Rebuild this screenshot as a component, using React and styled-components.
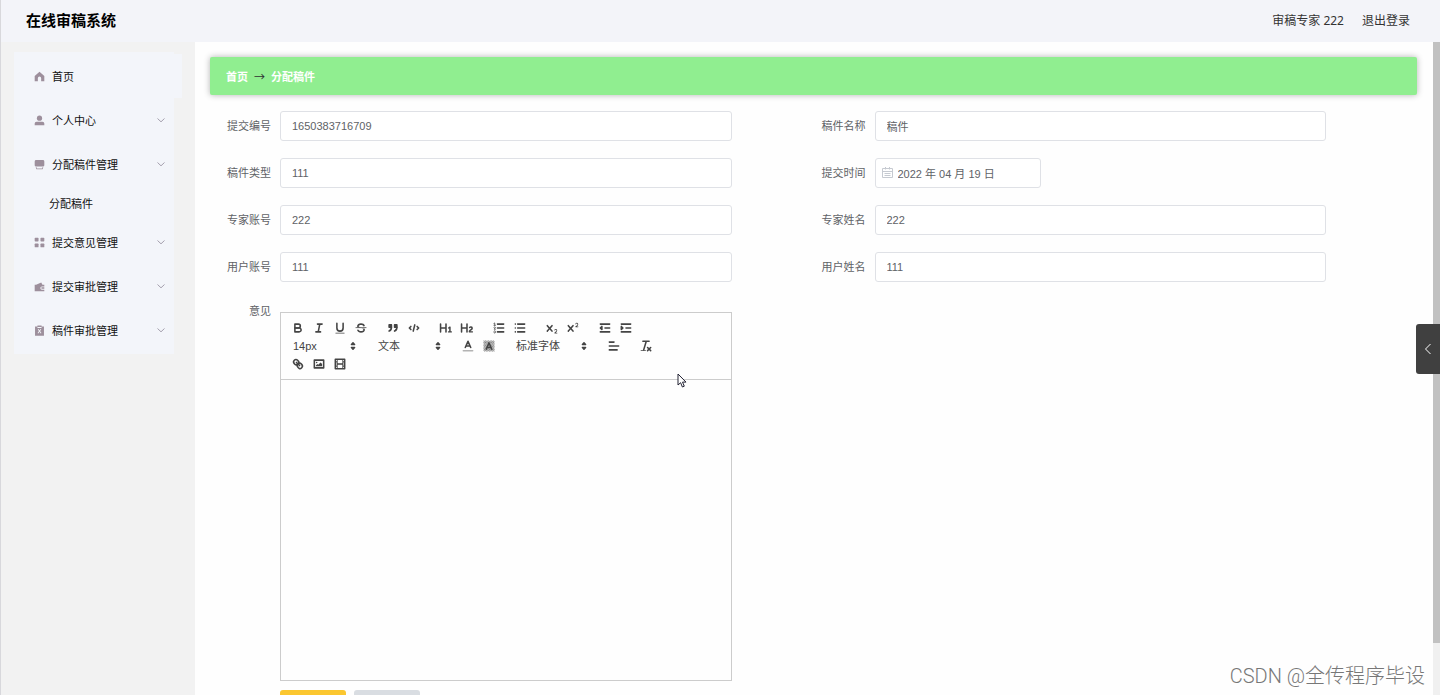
import { useState } from "react";
import styled, { createGlobalStyle } from "styled-components";

const menu = [
  { name: "首页", icon: "home", home: true },
  { name: "个人中心", icon: "user" },
  { name: "分配稿件管理", icon: "shop", children: ["分配稿件"] },
  { name: "提交意见管理", icon: "grid" },
  { name: "提交审批管理", icon: "wallet" },
  { name: "稿件审批管理", icon: "order" },
];

const campos = [
  { id: "bianhao", label: "提交编号", value: "1650383716709" },
  { id: "mingcheng", label: "稿件名称", value: "稿件" },
  { id: "leixing", label: "稿件类型", value: "111" },
  { id: "shijian", label: "提交时间", value: "2022 年 04 月 19 日", date: true },
  { id: "zhuanjiazhanghao", label: "专家账号", value: "222" },
  { id: "zhuanjiaxingming", label: "专家姓名", value: "222" },
  { id: "yonghuzhanghao", label: "用户账号", value: "111" },
  { id: "yonghuxingming", label: "用户姓名", value: "111" },
];

const menuIcons = {
  home: <path d="M8 1 1 7.4V15h4.6v-4.5a2.4 2.4 0 0 1 4.8 0V15H15V7.4Z" />,
  user: (
    <>
      <circle cx="8" cy="4.6" r="3.8" />
      <path d="M1 15v-2.5a2.7 2.7 0 0 1 2.7-2.7h8.6a2.7 2.7 0 0 1 2.7 2.7V15Z" />
    </>
  ),
  shop: (
    <>
      <path d="M3 1.5h10a2 2 0 0 1 2 2V9a2 2 0 0 1-2 2H3a2 2 0 0 1-2-2V3.500a2 2 0 0 1 2-2Z" />
      <path d="M2.500 12h1.200l.6 1.800h7.400l.6-1.800h1.200l-1 3h-9Z" />
    </>
  ),
  grid: (
    <>
      <rect x="1" y="1" width="5.600" height="5.600" rx="1" />
      <rect x="9.400" y="1" width="5.600" height="5.600" rx="1" />
      <rect x="1" y="9.400" width="5.600" height="5.600" rx="1" />
      <rect x="9.400" y="9.400" width="5.600" height="5.600" rx="1" />
    </>
  ),
  wallet: (
    <path
      fillRule="evenodd"
      d="M1 5.500h2L10.500 2l1.800 3.500H15V8h-3.500a2.300 2.300 0 0 0 0 4.600H15V15H1ZM11.600 9.200H15v2.200h-3.400a1.100 1.100 0 0 1 0-2.200Z"
    />
  ),
  order: (
    <path
      fillRule="evenodd"
      d="M1.500 2H5V.800h6V2h3.500v13.500h-13ZM5 3v1.200h6V3ZM5.500 6.500 7.200 8.800 5.200 11.500l1 .8L8 9.900l1.800 2.400 1-.8-2-2.700 1.700-2.300-1-.8L8 7.800 6.500 5.700Z"
    />
  ),
};

const xPath =
  "M9.65,5.241a1,1,0,0,0-1.409.108L6,7.964,3.759,5.349A1,1,0,0,0,2.192,6.59178Q2.21541,6.6213,2.241,6.649L4.684,9.5,2.241,12.35A1,1,0,0,0,3.71,13.70722q0.02557-.02768.049-0.05722L6,11.036,8.241,13.65a1,1,0,1,0,1.567-1.24277Q9.78459,12.3777,9.759,12.35L7.316,9.5,9.759,6.651A1,1,0,0,0,9.65,5.241Z";
const twoPath =
  "M15.5,15H13.861a3.858,3.858,0,0,0,1.914-2.975,1.8,1.8,0,0,0-1.6-1.751A1.921,1.921,0,0,0,12.021,11.7a0.50013,0.50013,0,1,0,.957.291h0a0.914,0.914,0,0,1,1.053-.725,0.81,0.81,0,0,1,.744.762c0,1.076-1.16971,1.86982-1.93971,2.43082A1.45639,1.45639,0,0,0,12,15.5a0.5,0.5,0,0,0,.5.5h3A0.5,0.5,0,0,0,15.5,15Z";

const toolIcons = {
  bold: (
    <>
      <path d="M5,4H9.5A2.5,2.5,0,0,1,12,6.5v0A2.5,2.5,0,0,1,9.5,9H5V4Z" />
      <path d="M5,9h5.5A2.5,2.5,0,0,1,13,11.5v0A2.5,2.5,0,0,1,10.5,14H5V9Z" />
    </>
  ),
  italic: <path d="M7,4H13M5,14H11M8,14L10,4" />,
  underline: (
    <>
      <path d="M5,3V9a4.012,4.012,0,0,0,4,4H9a4.012,4.012,0,0,0,4-4V3" />
      <rect className="fill" height="1" rx="0.5" width="12" x="3" y="15" />
    </>
  ),
  strike: (
    <>
      <path className="thin" d="M15.5,8.5H2.5" />
      <path
        className="fill"
        d="M9.007,8C6.542,7.791,6,7.519,6,6.5,6,5.792,7.283,5,9,5c1.571,0,2.765.679,2.969,1.309a1,1,0,0,0,1.9-.617C13.356,4.106,11.354,3,9,3,6.2,3,4,4.538,4,6.5a3.2,3.2,0,0,0,.5,1.843Z"
      />
      <path
        className="fill"
        d="M8.984,10C11.457,10.208,12,10.479,12,11.5c0,0.708-1.283,1.5-3,1.5-1.571,0-2.765-.679-2.969-1.309a1,1,0,1,0-1.9.617C4.644,13.894,6.646,15,9,15c2.8,0,5-1.538,5-3.5a3.2,3.2,0,0,0-.5-1.843Z"
      />
    </>
  ),
  quote: (
    <>
      <rect className="both" height="3" width="3" x="4" y="5" />
      <rect className="both" height="3" width="3" x="11" y="5" />
      <path className="both" d="M7,8c0,4.031-3,5-3,5" />
      <path className="both" d="M14,8c0,4.031-3,5-3,5" />
    </>
  ),
  code: <path d="M5,7L3,9L5,11M13,7L15,9L13,11M10,5L8,13" />,
  h1: (
    <path
      className="fill"
      d="M10,4V14a1,1,0,0,1-2,0V10H3v4a1,1,0,0,1-2,0V4A1,1,0,0,1,3,4V8H8V4a1,1,0,0,1,2,0Zm6.06787,9.209H14.98975V7.59863a.54085.54085,0,0,0-.605-.60547h-.62744a1.01119,1.01119,0,0,0-.748.29688L11.645,8.56641a.5435.5435,0,0,0-.022.8584l.28613.30762a.53861.53861,0,0,0,.84717.0332l.09912-.08789a1.2137,1.2137,0,0,0,.2417-.35254h.02246s-.01123.30859-.01123.60547V13.209H12.041a.54085.54085,0,0,0-.605.60547v.43945a.54085.54085,0,0,0,.605.60547h4.02686a.54085.54085,0,0,0,.605-.60547v-.43945A.54085.54085,0,0,0,16.06787,13.209Z"
    />
  ),
  h2: (
    <path
      className="fill"
      d="M16.73975,13.81445v.43945a.54085.54085,0,0,1-.605.60547H11.855a.58392.58392,0,0,1-.64893-.60547V14.0127c0-2.90527,3.39941-3.42187,3.39941-4.55469a.77675.77675,0,0,0-.84717-.78125,1.17684,1.17684,0,0,0-.83594.38477c-.2749.26367-.561.374-.85791.13184l-.4292-.34082c-.30811-.24219-.38525-.51758-.1543-.81445a2.97155,2.97155,0,0,1,2.45361-1.17676,2.45393,2.45393,0,0,1,2.68408,2.40918c0,2.45312-3.1792,2.92676-3.27832,3.93848h2.79443A.54085.54085,0,0,1,16.73975,13.81445ZM9,3A.99974.99974,0,0,0,8,4V8H3V4A1,1,0,0,0,1,4V14a1,1,0,0,0,2,0V10H8v4a1,1,0,0,0,2,0V4A.99974.99974,0,0,0,9,3Z"
    />
  ),
  ordered: (
    <>
      <path d="M7,4H15M7,9H15M7,14H15" />
      <path className="thin" d="M2.5,5.500H4.500M3.500,5.500V2.500L2.500,3" />
      <path className="thin" d="M4.5,10.5h-2c0-.234,1.85-1.076,1.85-2.234A0.959,0.959,0,0,0,2.5,8.156" />
      <path
        className="thin"
        d="M2.5,14.846a0.959,0.959,0,0,0,1.85-.109A0.7,0.7,0,0,0,3.75,14a0.688,0.688,0,0,0,.6-0.736,0.959,0.959,0,0,0-1.85-.109"
      />
    </>
  ),
  bullet: <path d="M6,4H15M6,9H15M6,14H15M3,4H3.01M3,9H3.01M3,14H3.01" />,
  sub: (
    <>
      <path className="fill" d={twoPath} />
      <path className="fill" d={xPath} />
    </>
  ),
  sup: (
    <>
      <path className="fill" d={twoPath} transform="translate(0 -8)" />
      <path className="fill" d={xPath} />
    </>
  ),
  outdent: (
    <>
      <path d="M3,14H15M3,4H15M9,9H15" />
      <path className="both" d="M5,7V11L3,9Z" />
    </>
  ),
  indent: (
    <>
      <path d="M3,14H15M3,4H15M9,9H15" />
      <path className="both" d="M3,7V11L5,9Z" />
    </>
  ),
  color: (
    <>
      <path className="label" d="M3,15H15" />
      <path d="M5.5,11L9,3L12.5,11M6.370,9H11.630" />
    </>
  ),
  background: (
    <>
      <path className="hatch" d="M2,2.500H16M2,4.500H16M2,6.500H16M2,8.500H16M2,10.500H16M2,12.500H16M2,14.500H16" />
      <path className="hatch" d="M3,3.500H16M3,5.500H16M3,7.500H16M3,9.500H16M3,11.500H16M3,13.500H16M3,15.500H16" />
      <path d="M5.5,13L9,5L12.5,13M6.370,11H11.630" />
    </>
  ),
  align: <path d="M3,9H15M3,14H13M3,4H9" />,
  clean: (
    <>
      <path d="M5,3H13M6,14L9.35,3M11,11L15,15M15,11L11,15" />
      <rect className="fill" height="1" rx="0.5" width="7" x="2" y="14" />
    </>
  ),
  link: (
    <>
      <path d="M7,7L11,11" />
      <path d="M8.9,4.577a3.476,3.476,0,0,1,.36,4.679A3.476,3.476,0,0,1,4.577,8.9C3.185,7.5,2.035,6.4,4.217,4.217S7.5,3.185,8.9,4.577Z" />
      <path d="M13.423,9.1a3.476,3.476,0,0,0-4.679-.36,3.476,3.476,0,0,0,.36,4.679c1.392,1.392,2.5,2.542,4.679.36S14.815,10.5,13.423,9.1Z" />
    </>
  ),
  image: (
    <>
      <rect height="10" width="12" x="3" y="4" />
      <circle className="fill" cx="6" cy="7" r="1" />
      <path className="fill" d="M5,12V11L7,9L8,10L11,7L13,9V12Z" />
    </>
  ),
  video: (
    <>
      <rect height="12" width="12" x="3" y="3" />
      <path className="fill" d="M5,3H6V15H5ZM12,3H13V15H12ZM5,8H13V10H5ZM3,5H6V6H3ZM3,7H6V8H3ZM3,10H6V11H3ZM3,12H6V13H3ZM12,5H15V6H12ZM12,7H15V8H12ZM12,10H15V11H12ZM12,12H15V13H12Z" />
    </>
  ),
};

const tools = [
  ["bold", "italic", "underline", "strike"],
  ["quote", "code"],
  ["h1", "h2"],
  ["ordered", "bullet"],
  ["sub", "sup"],
  ["outdent", "indent"],
  { label: "字号", value: "14px" },
  { label: "标题", value: "文本" },
  ["color", "background"],
  { label: "字体", value: "标准字体", wide: true },
  ["align"],
  ["clean"],
  ["link", "image", "video"],
];

function Campo({ campo }) {
  const [valor, setValor] = useState(campo.value);

  return (
    <Field>
      <Label htmlFor={campo.id}>{campo.label}</Label>
      <Control $date={campo.date}>
        {campo.date && (
          <CalendarIcon viewBox="0 0 11 11">
            <path d="M.5 1.500h10v9H.500ZM.500 4.500h10M3.500 0v2.500M7.500 0v2.500M2.500 6.500h6M2.500 8.500h6" />
          </CalendarIcon>
        )}
        <Input
          id={campo.id}
          type="text"
          value={valor}
          $date={campo.date}
          onChange={(e) => setValor(e.target.value)}
        />
      </Control>
    </Field>
  );
}

function Toolbar() {
  return (
    <Tools>
      {tools.map((group, i) => {
        if (Array.isArray(group)) {
          return (
            <ToolGroup key={i}>
              {group.map((name) => (
                <Tool key={name} type="button" aria-label={name}>
                  <ToolIcon viewBox="0 0 18 18">{toolIcons[name]}</ToolIcon>
                </Tool>
              ))}
            </ToolGroup>
          );
        }
        return (
          <Picker key={i} $wide={group.wide}>
            <select aria-label={group.label}>
              <option>{group.value}</option>
            </select>
            <ToolIcon viewBox="0 0 18 18">
              <path className="both" d="M7,11L9,13L11,11ZM7,7L9,5L11,7Z" />
            </ToolIcon>
          </Picker>
        );
      })}
    </Tools>
  );
}

export default function App() {
  return (
    <>
      <GlobalStyle />
      <Page>
        <Header>
          <h1>在线审稿系统</h1>
          <Account>
            <span>审稿专家 222</span>
            <a href="#logout">退出登录</a>
          </Account>
        </Header>
        <Body>
          <Sidebar>
            <Menu>
              {menu.map((item) => (
                <li key={item.name}>
                  <MenuItem href="#menu" $home={item.home}>
                    <MenuIcon viewBox="0 0 16 16">{menuIcons[item.icon]}</MenuIcon>
                    <span>{item.name}</span>
                    {!item.home && (
                      <Chevron viewBox="0 0 8 8">
                        <path d="M0.500 2.500 4 5.800 7.500 2.500" />
                      </Chevron>
                    )}
                  </MenuItem>
                  {item.children?.map((sub) => (
                    <SubItem key={sub} href="#sub">
                      {sub}
                    </SubItem>
                  ))}
                </li>
              ))}
            </Menu>
          </Sidebar>
          <Main>
            <Breadcrumb>
              <a href="#home">首页</a>
              <span>→</span>
              <a href="#list">分配稿件</a>
            </Breadcrumb>
            <Form onSubmit={(e) => e.preventDefault()}>
              {campos.map((campo) => (
                <Campo key={campo.id} campo={campo} />
              ))}
              <Field>
                <Label htmlFor="yijian" $top>
                  意见
                </Label>
                <Editor>
                  <Toolbar />
                  <textarea id="yijian" />
                </Editor>
              </Field>
              <Actions>
                <Botao type="submit" $primary>
                  提交
                </Botao>
                <Botao type="button">返回</Botao>
              </Actions>
            </Form>
          </Main>
          <ScrollTrack>
            <ScrollThumb />
          </ScrollTrack>
        </Body>
        <Drawer type="button" aria-label="展开">
          <svg viewBox="0 0 8 12">
            <path d="M6.500 1 1.500 6l5 5" />
          </svg>
        </Drawer>
        <Watermark>CSDN @全传程序毕设</Watermark>
        <Pointer viewBox="0 0 10 15">
          <path d="M1 1v11l2.600-2.300 1.800 4.300 1.900-.8-1.800-4.100H9Z" />
        </Pointer>
      </Page>
    </>
  );
}

const GlobalStyle = createGlobalStyle`
  * {
    box-sizing: border-box;
  }

  body {
    margin: 0;
    font-family: "Liberation Sans", "Noto Sans CJK SC", sans-serif;
    font-size: 11px;
    color: #606266;
    background: #fefefe;
  }

  input, select, textarea, button {
    font: inherit;
    color: inherit;
  }

  a {
    color: inherit;
    text-decoration: none;
  }
`;

const Page = styled.div`
  position: relative;
  display: flex;
  flex-direction: column;
  height: 100vh;
  overflow: hidden;
  border-left: 1px solid #d8d8dc;
`;

const Header = styled.header`
  display: flex;
  align-items: center;
  justify-content: space-between;
  flex-shrink: 0;
  height: 42px;
  padding: 0 30px 3px 25px;
  background: #f3f4f9;

  h1 {
    margin: 0;
    font-size: 15px;
    color: #000;
  }
`;

const Account = styled.div`
  display: flex;
  gap: 18px;
  font-family: "Noto Sans", "Noto Sans CJK SC", sans-serif;
  font-size: 12px;
  color: #333;
`;

const Body = styled.div`
  display: flex;
  flex: 1;
  min-height: 0;
`;

const Sidebar = styled.aside`
  flex: 0 0 194px;
  padding: 10px 21px 0 13px;
  background: #f2f2f2;
`;

const Menu = styled.ul`
  margin: 0;
  padding: 2px 0;
  list-style: none;
  background: #f3f5fa;
`;

const MenuItem = styled.a`
  display: flex;
  align-items: center;
  gap: 7px;
  height: 44px;
  padding: 0 9px 0 20px;
  margin-right: ${(props) => (props.$home ? "-8px" : "0")};
  background: #f3f5fa;
  color: #111;

  span {
    flex: 1;
  }
`;

const SubItem = styled.a`
  display: flex;
  align-items: center;
  height: 34px;
  padding-left: 35px;
  color: #111;
`;

const MenuIcon = styled.svg`
  width: 11px;
  height: 11px;
  fill: #9d8f9c;
`;

const Chevron = styled.svg`
  width: 8px;
  height: 8px;
  fill: none;
  stroke: #a5a0ae;
`;

const Main = styled.main`
  flex: 1;
  min-width: 0;
  padding: 15px 16px 0 15px;
  overflow: hidden;
`;

const Breadcrumb = styled.nav`
  display: flex;
  align-items: center;
  gap: 6px;
  height: 38px;
  padding: 0 16px;
  border-radius: 2px;
  background: #90ee90;
  box-shadow: 0 0 6px rgba(0, 0, 0, 0.3);
  font-weight: bold;
  color: #fff;

  span {
    font-family: "Noto Sans CJK SC", sans-serif;
    font-weight: normal;
    color: #303133;
  }
`;

const Form = styled.form`
  display: grid;
  grid-template-columns: 1fr 1fr;
  row-gap: 17px;
  padding: 16px 10px 0 8px;
`;

const Field = styled.div`
  display: flex;
  padding-right: 81px;
`;

const Label = styled.label`
  flex: 0 0 62px;
  padding-right: 9px;
  line-height: ${(props) => (props.$top ? "24px" : "30px")};
  text-align: right;
  white-space: nowrap;
`;

const Control = styled.div`
  position: relative;
  flex: ${(props) => (props.$date ? "0 0 166px" : "1")};
`;

const Input = styled.input`
  display: block;
  width: 100%;
  height: 30px;
  padding: 0 11px 0 ${(props) => (props.$date ? "22px" : "11px")};
  border: 1px solid #dfe1e6;
  border-radius: 3px;
  background: #fff;
  outline: none;
`;

const CalendarIcon = styled.svg`
  position: absolute;
  top: 9px;
  left: 7px;
  width: 11px;
  height: 11px;
  fill: none;
  stroke: #c6cad1;
`;

const Editor = styled.div`
  flex: 1;
  min-width: 0;
  margin-top: 13px;
  border: 1px solid #ccc;

  textarea {
    display: block;
    width: 100%;
    height: 300px;
    padding: 10px;
    border: none;
    outline: none;
    resize: none;
    background: transparent;
  }
`;

const Tools = styled.div`
  display: flex;
  flex-wrap: wrap;
  column-gap: 11px;
  padding: 6px 17px 6px 6px;
  border-bottom: 1px solid #ccc;
  color: #444;
`;

const ToolGroup = styled.div`
  display: flex;
`;

const Tool = styled.button`
  display: flex;
  align-items: center;
  justify-content: center;
  width: 21px;
  height: 18px;
  padding: 0;
  border: none;
  background: none;
`;

const ToolIcon = styled.svg`
  width: 14px;
  height: 14px;
  fill: none;
  stroke: #444;
  stroke-width: 2;
  stroke-linecap: round;
  stroke-linejoin: round;

  .fill {
    fill: #444;
    stroke: none;
  }

  .both {
    fill: #444;
  }

  .thin {
    stroke-width: 1;
  }

  .label {
    opacity: 0.4;
  }

  .hatch {
    stroke-width: 1;
    stroke-linecap: butt;
    stroke-dasharray: 1 1;
  }
`;

const Picker = styled.div`
  position: relative;
  width: ${(props) => (props.$wide ? "82px" : "74px")};
  height: 18px;

  select {
    width: 100%;
    height: 18px;
    padding: 0 6px;
    border: none;
    background: none;
    appearance: none;
  }

  svg {
    position: absolute;
    top: 2px;
    right: 1px;
    pointer-events: none;
  }
`;

const Actions = styled.div`
  display: flex;
  grid-column: 1 / -1;
  gap: 8px;
  padding-left: 62px;
  margin-top: -8px;
`;

const Botao = styled.button`
  width: 66px;
  height: 31px;
  border: none;
  border-radius: 3px;
  background: ${(props) => (props.$primary ? "#fbc730" : "#d9dde2")};
  color: ${(props) => (props.$primary ? "#fff" : "#606266")};
`;

const ScrollTrack = styled.div`
  flex: 0 0 7px;
  background: #f0f0f0;
`;

const ScrollThumb = styled.div`
  height: 92%;
  background: #c1c1c1;
`;

const Drawer = styled.button`
  position: absolute;
  top: 324px;
  right: 0;
  display: flex;
  align-items: center;
  justify-content: center;
  width: 24px;
  height: 50px;
  padding: 0;
  border: none;
  border-radius: 3px 0 0 3px;
  background: #404040;

  svg {
    width: 8px;
    height: 12px;
    fill: none;
    stroke: #fff;
  }
`;

const Watermark = styled.div`
  position: absolute;
  right: 15px;
  bottom: 4px;
  font-family: Roboto, "Noto Sans CJK SC", sans-serif;
  font-size: 20px;
  font-weight: 300;
  line-height: 30px;
  color: #777;
  text-shadow: -1px -1px 0 #fff;
`;

const Pointer = styled.svg`
  position: absolute;
  top: 373px;
  left: 676px;
  width: 10px;
  height: 15px;
  fill: #fff;
  stroke: #223;
  pointer-events: none;
`;
